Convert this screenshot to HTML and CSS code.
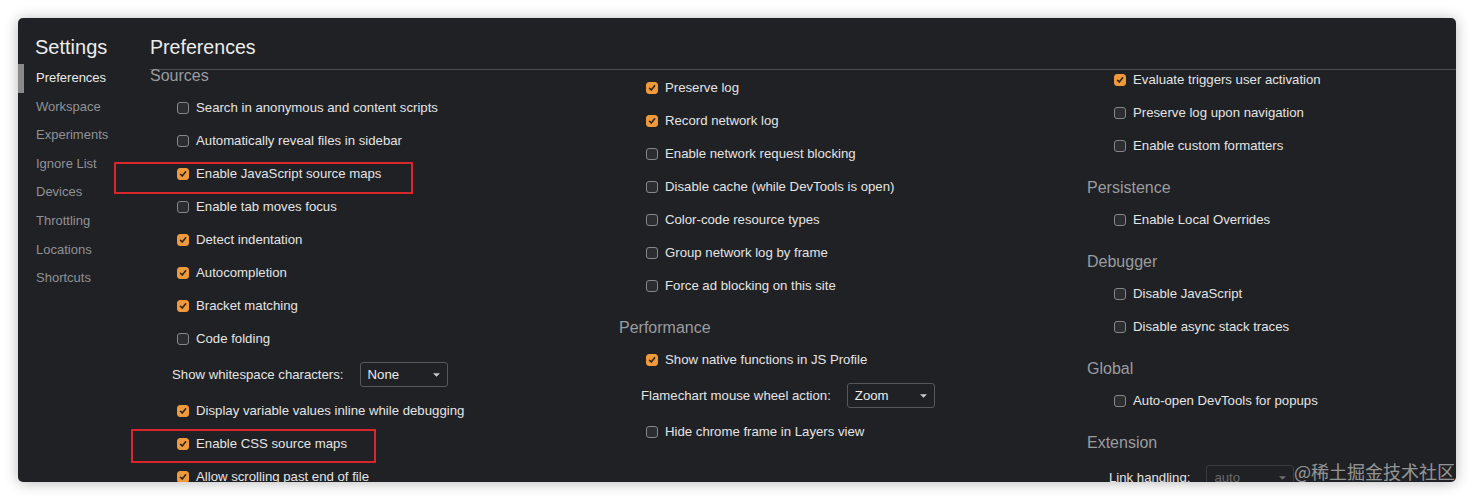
FILE: index.html
```html
<!DOCTYPE html>
<html lang="en">
<head>
<meta charset="utf-8">
<title>Settings</title>
<link rel="stylesheet" href="styles.css">
</head>
<body>
<div class="window">
  <aside class="sidebar">
    <div class="title">Settings</div>
    <nav class="nav">
      <div class="nav-item selected">Preferences</div>
      <div class="nav-item">Workspace</div>
      <div class="nav-item">Experiments</div>
      <div class="nav-item">Ignore List</div>
      <div class="nav-item">Devices</div>
      <div class="nav-item">Throttling</div>
      <div class="nav-item">Locations</div>
      <div class="nav-item">Shortcuts</div>
    </nav>
  </aside>
  <main class="main">
    <div class="title main-title">Preferences</div>
    <div class="content">
      <div class="col col1">
        <div class="section-h first">Sources</div>
        <div class="row"><span class="cb"></span>Search in anonymous and content scripts</div>
        <div class="row"><span class="cb"></span>Automatically reveal files in sidebar</div>
        <div class="row annotated"><span class="cb on"><svg viewBox="0 0 12 12"><path d="M3 6.3 L5.1 8.5 L9.2 3.4"/></svg></span>Enable JavaScript source maps<span class="mark mark-js"></span></div>
        <div class="row"><span class="cb"></span>Enable tab moves focus</div>
        <div class="row"><span class="cb on"><svg viewBox="0 0 12 12"><path d="M3 6.3 L5.1 8.5 L9.2 3.4"/></svg></span>Detect indentation</div>
        <div class="row"><span class="cb on"><svg viewBox="0 0 12 12"><path d="M3 6.3 L5.1 8.5 L9.2 3.4"/></svg></span>Autocompletion</div>
        <div class="row"><span class="cb on"><svg viewBox="0 0 12 12"><path d="M3 6.3 L5.1 8.5 L9.2 3.4"/></svg></span>Bracket matching</div>
        <div class="row"><span class="cb"></span>Code folding</div>
        <div class="select-row"><span class="label">Show whitespace characters:</span><div class="select"><span>None</span><svg viewBox="0 0 8 4"><path d="M0 0 H8 L4 4 Z"/></svg></div></div>
        <div class="row"><span class="cb on"><svg viewBox="0 0 12 12"><path d="M3 6.3 L5.1 8.5 L9.2 3.4"/></svg></span>Display variable values inline while debugging</div>
        <div class="row annotated"><span class="cb on"><svg viewBox="0 0 12 12"><path d="M3 6.3 L5.1 8.5 L9.2 3.4"/></svg></span>Enable CSS source maps<span class="mark mark-css"></span></div>
        <div class="row"><span class="cb on"><svg viewBox="0 0 12 12"><path d="M3 6.3 L5.1 8.5 L9.2 3.4"/></svg></span>Allow scrolling past end of file</div>
      </div>
      <div class="col col2">
        <div class="row"><span class="cb on"><svg viewBox="0 0 12 12"><path d="M3 6.3 L5.1 8.5 L9.2 3.4"/></svg></span>Preserve log</div>
        <div class="row"><span class="cb on"><svg viewBox="0 0 12 12"><path d="M3 6.3 L5.1 8.5 L9.2 3.4"/></svg></span>Record network log</div>
        <div class="row"><span class="cb"></span>Enable network request blocking</div>
        <div class="row"><span class="cb"></span>Disable cache (while DevTools is open)</div>
        <div class="row"><span class="cb"></span>Color-code resource types</div>
        <div class="row"><span class="cb"></span>Group network log by frame</div>
        <div class="row"><span class="cb"></span>Force ad blocking on this site</div>
        <div class="section-h">Performance</div>
        <div class="row"><span class="cb on"><svg viewBox="0 0 12 12"><path d="M3 6.3 L5.1 8.5 L9.2 3.4"/></svg></span>Show native functions in JS Profile</div>
        <div class="select-row"><span class="label">Flamechart mouse wheel action:</span><div class="select"><span>Zoom</span><svg viewBox="0 0 8 4"><path d="M0 0 H8 L4 4 Z"/></svg></div></div>
        <div class="row"><span class="cb"></span>Hide chrome frame in Layers view</div>
      </div>
      <div class="col col3">
        <div class="row"><span class="cb on"><svg viewBox="0 0 12 12"><path d="M3 6.3 L5.1 8.5 L9.2 3.4"/></svg></span>Evaluate triggers user activation</div>
        <div class="row"><span class="cb"></span>Preserve log upon navigation</div>
        <div class="row"><span class="cb"></span>Enable custom formatters</div>
        <div class="section-h">Persistence</div>
        <div class="row"><span class="cb"></span>Enable Local Overrides</div>
        <div class="section-h">Debugger</div>
        <div class="row"><span class="cb"></span>Disable JavaScript</div>
        <div class="row"><span class="cb"></span>Disable async stack traces</div>
        <div class="section-h">Global</div>
        <div class="row"><span class="cb"></span>Auto-open DevTools for popups</div>
        <div class="section-h">Extension</div>
        <div class="select-row"><span class="label">Link handling:</span><div class="select disabled"><span>auto</span><svg viewBox="0 0 8 4"><path d="M0 0 H8 L4 4 Z"/></svg></div></div>
      </div>
    </div>
  </main>
  <div class="watermark">@稀土掘金技术社区</div>
</div>
</body>
</html>
```

FILE: styles.css
```css
* { box-sizing: border-box; }

html, body {
  margin: 0;
  background: #ffffff;
}

body {
  padding: 18px;
  font-family: "Liberation Sans", Arial, Helvetica, sans-serif;
}

.window {
  position: relative;
  display: flex;
  width: 1438px;
  height: 464px;
  background: #202124;
  border-radius: 5px;
  overflow: hidden;
  box-shadow: 0 1px 14px rgba(0, 0, 0, 0.28);
  color: #e3e3e3;
}

.title {
  font-size: 20px;
  line-height: 24px;
  padding-top: 17px;
  color: #ececec;
}

.sidebar {
  width: 132px;
  flex: none;
}

.sidebar .title {
  padding-left: 17px;
  padding-bottom: 5px;
}

.nav-item {
  height: 28.6px;
  line-height: 28.6px;
  font-size: 13px;
  padding-left: 18px;
  color: #8f9296;
}

.nav-item.selected {
  border-left: 6px solid #8a8a8a;
  padding-left: 12px;
  color: #eaeaea;
}

.main {
  flex: 1;
  display: flex;
  flex-direction: column;
  min-width: 0;
}

.main-title {
  font-size: 19.6px;
  padding-bottom: 10px;
  border-bottom: 1px solid #4c4d51;
}

.content {
  flex: 1;
  display: grid;
  grid-template-columns: 469px 468px 1fr;
  align-items: start;
  clip-path: inset(-5px 0 0 -150px);
}

.col1 { margin-top: -5px; }
.col2 { margin-top: 1px; }
.col3 { margin-top: -7px; }

.section-h {
  height: 21px;
  line-height: 21px;
  font-size: 16px;
  color: #9a9ca0;
  margin-top: 15px;
  margin-bottom: 5px;
}

.section-h.first { margin-top: 0; }

.row {
  height: 33px;
  display: flex;
  align-items: center;
  padding-left: 27px;
  font-size: 13.2px;
  color: #e4e4e4;
  white-space: nowrap;
}

.annotated { position: relative; }

.cb {
  width: 12px;
  height: 12px;
  flex: none;
  margin-right: 7px;
  border: 1px solid #85878a;
  border-radius: 3px;
  background: #2c2d30;
  display: flex;
}

.cb.on {
  border-color: #f0993a;
  background: #f0993a;
}

.cb svg {
  width: 10px;
  height: 10px;
  fill: none;
  stroke: #26221d;
  stroke-width: 1.8;
  stroke-linecap: round;
  stroke-linejoin: round;
}

.select-row {
  height: 39px;
  display: flex;
  align-items: center;
  padding-left: 22px;
  font-size: 13.2px;
  color: #e4e4e4;
  white-space: nowrap;
}

.select-row .label { margin-right: 16px; }

.select {
  width: 88px;
  height: 25px;
  border: 1px solid #55575b;
  border-radius: 3px;
  display: flex;
  align-items: center;
  justify-content: space-between;
  padding: 0 7px 0 7px;
  color: #ececec;
}

.select svg {
  width: 7px;
  height: 4px;
  fill: #c9c9c9;
}

.select.disabled {
  border-color: #38393c;
  color: #6a6b6e;
}

.select.disabled svg { fill: #6a6b6e; }

.mark {
  position: absolute;
  border: 2px solid #d8262b;
  pointer-events: none;
}

.mark-js {
  left: -36px;
  top: 5px;
  width: 299px;
  height: 32px;
}

.mark-css {
  left: -19px;
  top: 2px;
  width: 245px;
  height: 34px;
}

.watermark {
  position: absolute;
  right: 1px;
  bottom: 0;
  font-family: "Noto Sans CJK SC", "Liberation Sans", sans-serif;
  font-size: 18px;
  line-height: 22px;
  color: rgba(225, 225, 225, 0.62);
  white-space: nowrap;
}
```
